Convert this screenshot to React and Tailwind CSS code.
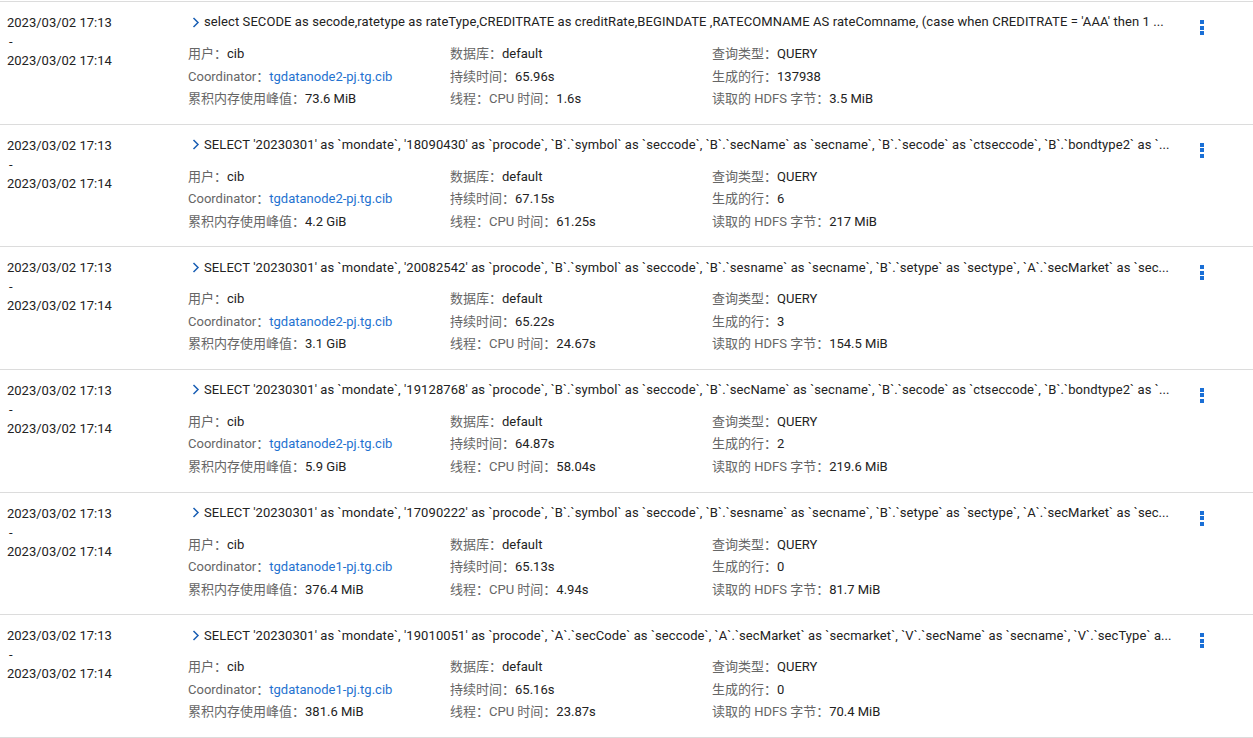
const rows = [
  {
    sql: "select SECODE as secode,ratetype as rateType,CREDITRATE as creditRate,BEGINDATE ,RATECOMNAME AS rateComname, (case when CREDITRATE = 'AAA' then 1 ...",
    coord: "tgdatanode2-pj.tg.cib",
    mem: "73.6 MiB",
    dur: "65.96s",
    cpu: "1.6s",
    rowsOut: "137938",
    hdfs: "3.5 MiB",
  },
  {
    sql: "SELECT '20230301' as `mondate`, '18090430' as `procode`, `B`.`symbol` as `seccode`, `B`.`secName` as `secname`, `B`.`secode` as `ctseccode`, `B`.`bondtype2` as `...",
    coord: "tgdatanode2-pj.tg.cib",
    mem: "4.2 GiB",
    dur: "67.15s",
    cpu: "61.25s",
    rowsOut: "6",
    hdfs: "217 MiB",
  },
  {
    sql: "SELECT '20230301' as `mondate`, '20082542' as `procode`, `B`.`symbol` as `seccode`, `B`.`sesname` as `secname`, `B`.`setype` as `sectype`, `A`.`secMarket` as `sec...",
    coord: "tgdatanode2-pj.tg.cib",
    mem: "3.1 GiB",
    dur: "65.22s",
    cpu: "24.67s",
    rowsOut: "3",
    hdfs: "154.5 MiB",
  },
  {
    sql: "SELECT '20230301' as `mondate`, '19128768' as `procode`, `B`.`symbol` as `seccode`, `B`.`secName` as `secname`, `B`.`secode` as `ctseccode`, `B`.`bondtype2` as `...",
    coord: "tgdatanode2-pj.tg.cib",
    mem: "5.9 GiB",
    dur: "64.87s",
    cpu: "58.04s",
    rowsOut: "2",
    hdfs: "219.6 MiB",
  },
  {
    sql: "SELECT '20230301' as `mondate`, '17090222' as `procode`, `B`.`symbol` as `seccode`, `B`.`sesname` as `secname`, `B`.`setype` as `sectype`, `A`.`secMarket` as `sec...",
    coord: "tgdatanode1-pj.tg.cib",
    mem: "376.4 MiB",
    dur: "65.13s",
    cpu: "4.94s",
    rowsOut: "0",
    hdfs: "81.7 MiB",
  },
  {
    sql: "SELECT '20230301' as `mondate`, '19010051' as `procode`, `A`.`secCode` as `seccode`, `A`.`secMarket` as `secmarket`, `V`.`secName` as `secname`, `V`.`secType` a...",
    coord: "tgdatanode1-pj.tg.cib",
    mem: "381.6 MiB",
    dur: "65.16s",
    cpu: "23.87s",
    rowsOut: "0",
    hdfs: "70.4 MiB",
  },
];

function Field({ label, children }) {
  return (
    <div className="h-[22.5px] leading-[22.5px] whitespace-nowrap">
      <span className="text-[#666]">{label}：</span>
      {children}
    </div>
  );
}

function Kebab() {
  return (
    <div className="flex flex-col gap-[1.5px] pt-[7px]">
      <span className="block w-[4px] h-[4px] bg-[#1a6fd6]" />
      <span className="block w-[4px] h-[4px] bg-[#1a6fd6]" />
      <span className="block w-[4px] h-[4px] bg-[#1a6fd6]" />
    </div>
  );
}

function QueryRow({ q }) {
  return (
    <div className="flex h-[122.67px] border-b border-[#dcdcdc]">
      <div className="w-[188px] pl-[7px] pt-[11px] leading-[19px] text-[#222]">
        <div>2023/03/02 17:13</div>
        <div className="pl-[2px]">-</div>
        <div>2023/03/02 17:14</div>
      </div>
      <div className="flex-1 min-w-0 pt-[10px]">
        <div className="flex items-center h-[20px] pl-[4px] text-[#222] whitespace-nowrap tracking-[0.09px]">
          <svg width="8" height="11" viewBox="0 0 8 11" className="mr-[4px] shrink-0">
            <path d="M1.5 1 L6 5.5 L1.5 10" fill="none" stroke="#1a5fb4" strokeWidth="1.5" />
          </svg>
          <span className="truncate">{q.sql}</span>
        </div>
        <div className="grid grid-cols-[262px_262px_1fr] pt-[11px] text-[#222]">
          <div>
            <Field label="用户">cib</Field>
            <Field label="Coordinator">
              <span className="text-[#1f72d0]">{q.coord}</span>
            </Field>
            <Field label="累积内存使用峰值">{q.mem}</Field>
          </div>
          <div>
            <Field label="数据库">default</Field>
            <Field label="持续时间">{q.dur}</Field>
            <Field label="线程：CPU 时间">{q.cpu}</Field>
          </div>
          <div>
            <Field label="查询类型">QUERY</Field>
            <Field label="生成的行">{q.rowsOut}</Field>
            <Field label="读取的 HDFS 字节">{q.hdfs}</Field>
          </div>
        </div>
      </div>
      <div className="w-[60px] pl-[7px] pt-[11px] shrink-0">
        <Kebab />
      </div>
    </div>
  );
}

export default function App() {
  return (
    <div
      className="w-[1253px] bg-white text-[13px] pt-[1px]"
      style={{ fontFamily: "Roboto, 'Noto Sans CJK SC', sans-serif" }}
    >
      <div className="border-t border-[#dcdcdc]">
        {rows.map((q, i) => (
          <QueryRow key={i} q={q} />
        ))}
      </div>
    </div>
  );
}
